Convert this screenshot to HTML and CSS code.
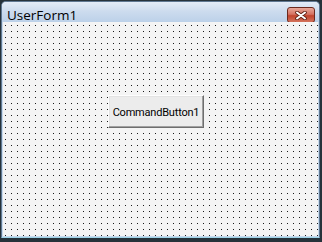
FILE: index.html
```html
<!DOCTYPE html>
<html lang="en">
<head>
  <meta charset="UTF-8" />
  <title>UserForm1</title>
  <link rel="stylesheet" href="styles.css">
</head>
<body>
  <div class="window">
    <div class="titlebar">
      <span class="title">UserForm1</span>
      <span class="close-btn">
        <svg width="12" height="9" viewBox="0 0 12 9">
          <path d="M2 1.5 L10 7.5 M10 1.5 L2 7.5" stroke="#5a1d12" stroke-width="3.6" stroke-linecap="round" />
          <path d="M2 1.5 L10 7.5 M10 1.5 L2 7.5" stroke="#ffffff" stroke-width="2" stroke-linecap="round" />
        </svg>
      </span>
    </div>
    <div class="client">
      <button class="command-btn">CommandButton1</button>
    </div>
  </div>
</body>
</html>
```

FILE: styles.css
```css
* {
  margin: 0;
  padding: 0;
  box-sizing: border-box;
}

body {
  background: #26323a;
  font-family: 'Noto Sans', 'DejaVu Sans', sans-serif;
  width: 322px;
  height: 242px;
  overflow: hidden;
}

.window {
  margin: 1px 2px 0 1px;
  height: 237px;
  display: flex;
  flex-direction: column;
  background: #c7d9ec;
  border: 1px solid #5f7892;
  border-bottom: 1px solid #9fd4e8;
  border-radius: 5px 5px 0 0;
}

.titlebar {
  height: 20px;
  display: flex;
  align-items: center;
  justify-content: space-between;
  padding: 0 4px 0 5px;
  background: linear-gradient(to bottom, #e3ecf7, #cddcee 45%, #bcd1e9);
  border-radius: 4px 4px 0 0;
}

.title {
  font-family: 'Open Sans', sans-serif;
  font-size: 13.5px;
  color: #000;
  padding-top: 5px;
}

.close-btn {
  width: 28px;
  height: 16px;
  margin-top: 6px;
  display: flex;
  align-items: center;
  justify-content: center;
  border: 1px solid #6b2a1e;
  border-radius: 3px;
  background: linear-gradient(to bottom, #e8a99a, #d57262 45%, #c1432c 55%, #d3735c);
}

.client {
  flex: 1;
  position: relative;
  margin: 0 1px 1px;
  background-color: #f4f4f4;
  background-image:
    linear-gradient(to right, #f4f4f4 5px, transparent 5px),
    linear-gradient(to bottom, #f4f4f4 5px, #1a1a1a 5px);
  background-size: 6px 6px;
  background-position: -3px -2px;
}

.command-btn {
  position: absolute;
  left: 105px;
  top: 73px;
  width: 96px;
  height: 33px;
  padding: 2px 0 0;
  font-family: Roboto, sans-serif;
  font-size: 11px;
  letter-spacing: -0.2px;
  color: #000;
  background: #ececec;
  border: 1px solid;
  border-color: #fdfdfd #6e6e6e #6e6e6e #fdfdfd;
  box-shadow: inset -1px -1px 0 #a0a0a0, inset 1px 1px 0 #e3e3e3;
}
```
